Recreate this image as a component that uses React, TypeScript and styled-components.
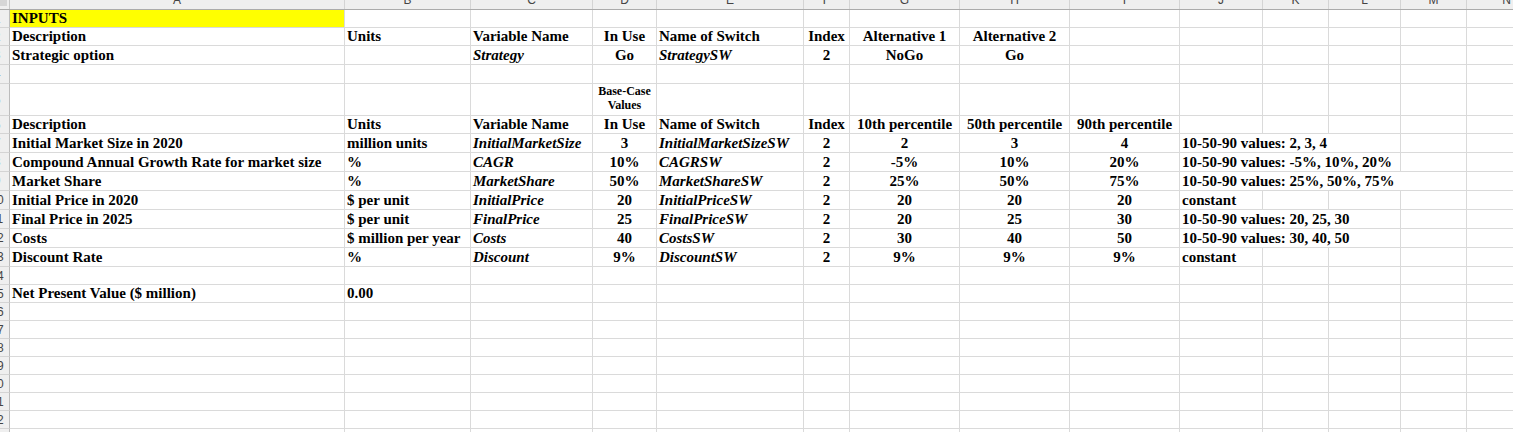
import React from "react";
import styled, { createGlobalStyle } from "styled-components";

// column widths A..N (each includes its 1px right gridline)
const COLS = [335, 126, 122, 64, 147, 46, 110, 110, 110, 83, 66, 72, 66, 80];
const TEMPLATE = `10px ${COLS.map((w) => `${w}px`).join(" ")}`;
const LETTERS = "ABCDEFGHIJKLMN".split("");
const GRID = "#dadada";
const HEAD_BG = "#efefef";

type Align = "left" | "center";

interface CellData {
  text: string;
  align?: Align;
  italic?: boolean;
  span?: number;
  fill?: string;
  small?: boolean;
}

interface RowData {
  h: number;
  cells: (CellData | null)[];
}

const GlobalStyle = createGlobalStyle`
  html, body {
    margin: 0;
    padding: 0;
    background: #fff;
    overflow: hidden;
  }
`;

const Sheet = styled.div`
  width: 1513px;
  height: 432px;
  overflow: hidden;
  background: #fff;
  font-family: "Liberation Serif", "Times New Roman", serif;
  font-weight: bold;
  font-size: 15px;
  color: #000;
`;

const HeaderBar = styled.div`
  display: grid;
  grid-template-columns: ${TEMPLATE};
  height: 10px;
  box-sizing: border-box;
  background: ${HEAD_BG};
  border-bottom: 1px solid #ababab;
`;

const Corner = styled.div`
  border-right: 1px solid #c8c8c8;
  display: flex;
  align-items: flex-start;
  &::before {
    content: "";
    width: 7px;
    height: 6px;
    background: #d6d6d6;
  }
`;

const ColHead = styled.div`
  border-right: 1px solid #d4d4d4;
  display: flex;
  justify-content: center;
  align-items: flex-end;
  overflow: hidden;
  font-family: "Liberation Sans", Arial, sans-serif;
  font-weight: normal;
  font-size: 12px;
  line-height: 12px;
  color: #444;
  span {
    margin-bottom: 3px;
  }
`;

const Row = styled.div<{ $h: number }>`
  display: grid;
  grid-template-columns: ${TEMPLATE};
  height: ${(p) => p.$h}px;
`;

const RowHead = styled.div`
  background: ${HEAD_BG};
  border-right: 1px solid #bcbcbc;
  border-bottom: 1px solid #d4d4d4;
  box-sizing: border-box;
  overflow: hidden;
  display: flex;
  align-items: center;
  font-family: "Liberation Sans", Arial, sans-serif;
  font-weight: normal;
  font-size: 12px;
  color: #444;
`;

const RowNum = styled.span`
  flex: 0 0 30px;
  margin-left: -18px;
  text-align: center;
`;

const Cell = styled.div<{
  $align: Align;
  $italic: boolean;
  $span: number;
  $fill: string;
  $small: boolean;
}>`
  grid-column: span ${(p) => p.$span};
  box-sizing: border-box;
  border-right: 1px solid ${GRID};
  border-bottom: 1px solid ${GRID};
  background: ${(p) => p.$fill};
  display: flex;
  align-items: flex-end;
  justify-content: ${(p) => (p.$align === "center" ? "center" : "flex-start")};
  padding: 0 2px ${(p) => (p.$small ? 3 : 1)}px;
  overflow: hidden;
  white-space: ${(p) => (p.$small ? "normal" : "nowrap")};
  text-align: ${(p) => p.$align};
  font-style: ${(p) => (p.$italic ? "italic" : "normal")};
  font-size: ${(p) => (p.$small ? 12 : 15)}px;
  line-height: ${(p) => (p.$small ? 14 : 16)}px;
`;

const L = (text: string, extra: Partial<CellData> = {}): CellData => ({ text, ...extra });
const I = (text: string): CellData => ({ text, italic: true });
const C = (text: string): CellData => ({ text, align: "center" });
const J = (text: string, span = 1): CellData => ({ text, span });

const headerRow = [
  L("Description"),
  L("Units"),
  L("Variable Name"),
  C("In Use"),
  L("Name of Switch"),
  C("Index"),
];

const dataRow = (
  desc: string,
  units: string,
  name: string,
  inUse: string,
  sw: string,
  p10: string,
  p50: string,
  p90: string,
  note: CellData
): (CellData | null)[] => [
  L(desc),
  L(units),
  I(name),
  C(inUse),
  I(sw),
  C("2"),
  C(p10),
  C(p50),
  C(p90),
  note,
];

const ROWS: RowData[] = [
  { h: 18, cells: [L("INPUTS", { fill: "#ffff00" })] },
  { h: 18, cells: [...headerRow, C("Alternative 1"), C("Alternative 2")] },
  {
    h: 19,
    cells: [L("Strategic option"), null, I("Strategy"), C("Go"), I("StrategySW"), C("2"), C("NoGo"), C("Go")],
  },
  { h: 19, cells: [] },
  { h: 32, cells: [null, null, null, { text: "Base-Case Values", align: "center", small: true }] },
  {
    h: 18,
    cells: [...headerRow, C("10th percentile"), C("50th percentile"), C("90th percentile")],
  },
  {
    h: 19,
    cells: dataRow("Initial Market Size in 2020", "million units", "InitialMarketSize", "3", "InitialMarketSizeSW", "2", "3", "4", J("10-50-90 values: 2, 3, 4", 3)),
  },
  {
    h: 19,
    cells: dataRow("Compound Annual Growth Rate for market size", "%", "CAGR", "10%", "CAGRSW", "-5%", "10%", "20%", J("10-50-90 values: -5%, 10%, 20%", 3)),
  },
  {
    h: 19,
    cells: dataRow("Market Share", "%", "MarketShare", "50%", "MarketShareSW", "25%", "50%", "75%", J("10-50-90 values: 25%, 50%, 75%", 4)),
  },
  {
    h: 19,
    cells: dataRow("Initial Price in 2020", "$ per unit", "InitialPrice", "20", "InitialPriceSW", "20", "20", "20", J("constant")),
  },
  {
    h: 19,
    cells: dataRow("Final Price in 2025", "$ per unit", "FinalPrice", "25", "FinalPriceSW", "20", "25", "30", J("10-50-90 values: 20, 25, 30", 3)),
  },
  {
    h: 19,
    cells: dataRow("Costs", "$ million per year", "Costs", "40", "CostsSW", "30", "40", "50", J("10-50-90 values: 30, 40, 50", 3)),
  },
  {
    h: 19,
    cells: dataRow("Discount Rate", "%", "Discount", "9%", "DiscountSW", "9%", "9%", "9%", J("constant")),
  },
  { h: 18, cells: [] },
  { h: 18, cells: [L("Net Present Value ($ million)"), L("0.00")] },
  ...Array.from({ length: 8 }, () => ({ h: 18, cells: [] })),
];

const SheetRow = ({ index, row }: { index: number; row: RowData }) => {
  const out: React.ReactNode[] = [];
  let col = 0;
  while (col < COLS.length) {
    const cell = row.cells[col] ?? null;
    const span = cell?.span ?? 1;
    out.push(
      <Cell
        key={col}
        $align={cell?.align ?? "left"}
        $italic={!!cell?.italic}
        $span={span}
        $fill={cell?.fill ?? "transparent"}
        $small={!!cell?.small}
      >
        {cell?.text}
      </Cell>
    );
    col += span;
  }
  return (
    <Row $h={row.h}>
      <RowHead>
        <RowNum>{index + 1}</RowNum>
      </RowHead>
      {out}
    </Row>
  );
};

const App = () => {
  return (
    <>
      <GlobalStyle />
      <Sheet>
        <HeaderBar>
          <Corner />
          {LETTERS.map((l) => (
            <ColHead key={l}>
              <span>{l}</span>
            </ColHead>
          ))}
        </HeaderBar>
        {ROWS.map((row, i) => (
          <SheetRow key={i} index={i} row={row} />
        ))}
      </Sheet>
    </>
  );
};

export default App;
